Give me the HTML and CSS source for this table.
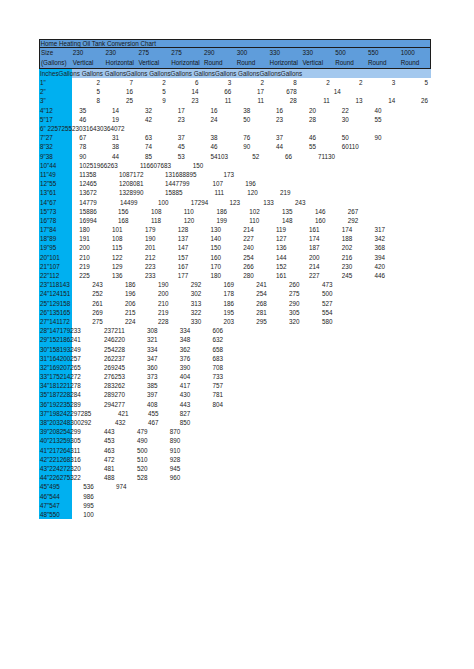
FILE: index.html
```html
<!DOCTYPE html>
<html>
<head>
<meta charset="utf-8">
<title>Home Heating Oil Tank Conversion Chart</title>
<link rel="stylesheet" href="styles.css">
</head>
<body>
<div class="sheet">
  <div class="head">
    <div class="title">Home Heating Oil Tank Conversion Chart</div>
    <div class="row hrow"><span class="a">Size</span><span class="h">230</span><span class="h">230</span><span class="h">275</span><span class="h">275</span><span class="h">290</span><span class="h">300</span><span class="h">330</span><span class="h">330</span><span class="h">500</span><span class="h">550</span><span class="h">1000</span></div>
    <div class="row hrow"><span class="a">(Gallons)</span><span class="h">Vertical</span><span class="h">Horizontal</span><span class="h">Vertical</span><span class="h">Horizontal</span><span class="h">Round</span><span class="h">Round</span><span class="h">Horizontal</span><span class="h">Vertical</span><span class="h">Round</span><span class="h">Round</span><span class="h">Round</span></div>
  </div>
  <div class="body">
    <div class="inches">InchesGallons Gallons GallonsGallons GallonsGallons GallonsGallons GallonsGallonsGallons</div>
    <div class="row"><span class="a">1"</span><span class="r">2</span><span class="r">7</span><span class="r">2</span><span class="r">6</span><span class="r">3</span><span class="r">2</span><span class="r">8</span><span class="r">2</span><span class="r">2</span><span class="r">3</span><span class="r">5</span></div>
    <div class="row"><span class="a">2"</span><span class="r">5</span><span class="r">16</span><span class="r">5</span><span class="r">14</span><span class="r">66</span><span class="r">17</span><span class="r">678</span><span></span><span class="p0">14</span></div>
    <div class="row"><span class="a">3"</span><span class="r">8</span><span class="r">25</span><span class="r">9</span><span class="r">23</span><span class="r">11</span><span class="r">11</span><span class="r">28</span><span class="r">11</span><span class="r">13</span><span class="r">14</span><span class="r">26</span></div>
    <div class="row"><span class="a">4"12</span><span class="p8">35</span><span class="p8">14</span><span class="p8">32</span><span class="p8">17</span><span class="p8">16</span><span class="p8">38</span><span class="p8">16</span><span class="p8">20</span><span class="p8">22</span><span class="p8">40</span></div>
    <div class="row"><span class="a">5"17</span><span class="p8">46</span><span class="p8">19</span><span class="p8">42</span><span class="p8">23</span><span class="p8">24</span><span class="p8">50</span><span class="p8">23</span><span class="p8">28</span><span class="p8">30</span><span class="p8">55</span></div>
    <div class="row"><span class="a">6" 2257255230316430364072</span></div>
    <div class="row"><span class="a">7"27</span><span class="p8">67</span><span class="p8">31</span><span class="p8">63</span><span class="p8">37</span><span class="p8">38</span><span class="p8">76</span><span class="p8">37</span><span class="p8">46</span><span class="p8">50</span><span class="p8">90</span></div>
    <div class="row"><span class="a">8"32</span><span class="p8">78</span><span class="p8">38</span><span class="p8">74</span><span class="p8">45</span><span class="p8">46</span><span class="p8">90</span><span class="p8">44</span><span class="p8">55</span><span class="p8">60110</span></div>
    <div class="row"><span class="a">9"38</span><span class="p8">90</span><span class="p8">44</span><span class="p8">85</span><span class="p8">53</span><span class="p8">54103</span><span class="p17">52</span><span class="p17">66</span><span class="p17">71130</span></div>
    <div class="row"><span class="a">10"44</span><span class="p8">10251966263</span><span></span><span class="p3">116607683</span><span class="p23">150</span></div>
    <div class="row"><span class="a">11"49</span><span class="p8">11358</span><span class="p15">1087172</span><span class="p28">131688895</span><span></span><span class="p21">173</span></div>
    <div class="row"><span class="a">12"55</span><span class="p8">12465</span><span class="p15">1208081</span><span class="p28">1447799</span><span></span><span class="p10">107</span><span class="p10">196</span></div>
    <div class="row"><span class="a">13"61</span><span class="p8">13672</span><span class="p15">1328990</span><span class="p28">15885</span><span></span><span class="p12">111</span><span class="p12">120</span><span class="p12">219</span></div>
    <div class="row"><span class="a">14"67</span><span class="p8">14779</span><span class="p16">14499</span><span class="p21">100</span><span class="p21">17294</span><span class="p27">123</span><span class="p28">133</span><span class="p27">243</span></div>
    <div class="row"><span class="a">15"73</span><span class="p8">15886</span><span class="p14">156</span><span class="p14">108</span><span class="p14">110</span><span class="p14">186</span><span class="p14">102</span><span class="p14">135</span><span class="p14">146</span><span class="p14">267</span></div>
    <div class="row"><span class="a">16"78</span><span class="p8">16994</span><span class="p14">168</span><span class="p14">118</span><span class="p14">120</span><span class="p14">199</span><span class="p14">110</span><span class="p14">148</span><span class="p14">160</span><span class="p14">292</span></div>
    <div class="row"><span class="a">17"84</span><span class="p8">180</span><span class="p8">101</span><span class="p8">179</span><span class="p8">128</span><span class="p8">130</span><span class="p8">214</span><span class="p8">119</span><span class="p8">161</span><span class="p8">174</span><span class="p8">317</span></div>
    <div class="row"><span class="a">18"89</span><span class="p8">191</span><span class="p8">108</span><span class="p8">190</span><span class="p8">137</span><span class="p8">140</span><span class="p8">227</span><span class="p8">127</span><span class="p8">174</span><span class="p8">188</span><span class="p8">342</span></div>
    <div class="row"><span class="a">19"95</span><span class="p8">200</span><span class="p8">115</span><span class="p8">201</span><span class="p8">147</span><span class="p8">150</span><span class="p8">240</span><span class="p8">136</span><span class="p8">187</span><span class="p8">202</span><span class="p8">368</span></div>
    <div class="row"><span class="a">20"101</span><span class="p8">210</span><span class="p8">122</span><span class="p8">212</span><span class="p8">157</span><span class="p8">160</span><span class="p8">254</span><span class="p8">144</span><span class="p8">200</span><span class="p8">216</span><span class="p8">394</span></div>
    <div class="row"><span class="a">21"107</span><span class="p8">219</span><span class="p8">129</span><span class="p8">223</span><span class="p8">167</span><span class="p8">170</span><span class="p8">266</span><span class="p8">152</span><span class="p8">214</span><span class="p8">230</span><span class="p8">420</span></div>
    <div class="row"><span class="a">22"112</span><span class="p8">225</span><span class="p8">136</span><span class="p8">233</span><span class="p8">177</span><span class="p8">180</span><span class="p8">280</span><span class="p8">161</span><span class="p8">227</span><span class="p8">245</span><span class="p8">446</span></div>
    <div class="row"><span class="a">23"118143</span><span class="p21">243</span><span class="p21">186</span><span class="p21">190</span><span class="p21">292</span><span class="p21">169</span><span class="p21">241</span><span class="p21">260</span><span class="p21">473</span></div>
    <div class="row"><span class="a">24"124151</span><span class="p21">252</span><span class="p21">196</span><span class="p21">200</span><span class="p21">302</span><span class="p21">178</span><span class="p21">254</span><span class="p21">275</span><span class="p21">500</span></div>
    <div class="row"><span class="a">25"129158</span><span class="p21">261</span><span class="p21">206</span><span class="p21">210</span><span class="p21">313</span><span class="p21">186</span><span class="p21">268</span><span class="p21">290</span><span class="p21">527</span></div>
    <div class="row"><span class="a">26"135165</span><span class="p21">269</span><span class="p21">215</span><span class="p21">219</span><span class="p21">322</span><span class="p21">195</span><span class="p21">281</span><span class="p21">305</span><span class="p21">554</span></div>
    <div class="row"><span class="a">27"141172</span><span class="p21">275</span><span class="p21">224</span><span class="p21">228</span><span class="p21">330</span><span class="p21">203</span><span class="p21">295</span><span class="p21">320</span><span class="p21">580</span></div>
    <div class="row"><span class="a">28"147179233</span><span></span><span class="p0">237211</span><span class="p10">308</span><span class="p10">334</span><span class="p10">606</span></div>
    <div class="row"><span class="a">29"152186241</span><span></span><span class="p0">246220</span><span class="p10">321</span><span class="p10">348</span><span class="p10">632</span></div>
    <div class="row"><span class="a">30"158193249</span><span></span><span class="p0">254228</span><span class="p10">334</span><span class="p10">362</span><span class="p10">658</span></div>
    <div class="row"><span class="a">31"164200257</span><span></span><span class="p0">262237</span><span class="p10">347</span><span class="p10">376</span><span class="p10">683</span></div>
    <div class="row"><span class="a">32"169207265</span><span></span><span class="p0">269245</span><span class="p10">360</span><span class="p10">390</span><span class="p10">708</span></div>
    <div class="row"><span class="a">33"175214272</span><span></span><span class="p0">276253</span><span class="p10">373</span><span class="p10">404</span><span class="p10">733</span></div>
    <div class="row"><span class="a">34"181221278</span><span></span><span class="p0">283262</span><span class="p10">385</span><span class="p10">417</span><span class="p10">757</span></div>
    <div class="row"><span class="a">35"187228284</span><span></span><span class="p0">289270</span><span class="p10">397</span><span class="p10">430</span><span class="p10">781</span></div>
    <div class="row"><span class="a">36"192235289</span><span></span><span class="p0">294277</span><span class="p10">408</span><span class="p10">443</span><span class="p10">804</span></div>
    <div class="row"><span class="a">37"198242297285</span><span></span><span class="p14">421</span><span class="p11">455</span><span class="p10">827</span></div>
    <div class="row"><span class="a">38"203248300292</span><span></span><span class="p11">432</span><span class="p11">467</span><span class="p10">850</span></div>
    <div class="row"><span class="a">39"208254299</span><span></span><span class="p0">443</span><span class="p0">479</span><span class="p0">870</span></div>
    <div class="row"><span class="a">40"213259305</span><span></span><span class="p0">453</span><span class="p0">490</span><span class="p0">890</span></div>
    <div class="row"><span class="a">41"217264311</span><span></span><span class="p0">463</span><span class="p0">500</span><span class="p0">910</span></div>
    <div class="row"><span class="a">42"221268316</span><span></span><span class="p0">472</span><span class="p0">510</span><span class="p0">928</span></div>
    <div class="row"><span class="a">43"224272320</span><span></span><span class="p0">481</span><span class="p0">520</span><span class="p0">945</span></div>
    <div class="row"><span class="a">44"226275322</span><span></span><span class="p0">488</span><span class="p0">528</span><span class="p0">960</span></div>
    <div class="row"><span class="a">45"495</span><span class="p12">536</span><span class="p12">974</span></div>
    <div class="row"><span class="a">46"544</span><span class="p12">986</span></div>
    <div class="row"><span class="a">47"547</span><span class="p12">995</span></div>
    <div class="row"><span class="a">48"550</span><span class="p12">100</span></div>
  </div>
</div>
</body>
</html>
```
FILE: styles.css
```css
html, body {
  margin: 0;
  padding: 0;
  background: #ffffff;
}

body {
  font-family: "Liberation Sans", Arial, sans-serif;
  font-size: 6.3px;
  color: #222222;
}

.sheet {
  margin: 39px 0 0 38.5px;
  width: 394px;
}

.row {
  display: grid;
  grid-template-columns: repeat(12, 32.8px);
  height: 9.19px;
  line-height: 9.19px;
  white-space: nowrap;
}

.row > span {
  min-width: 0;
  overflow: visible;
}

.head {
  box-sizing: border-box;
  width: 392px;
  border: 1px solid #1c1c1c;
  background: #5f9ddb;
  color: #161616;
}

.title {
  height: 7px;
  line-height: 7px;
  padding-left: 1px;
  border-bottom: 1px solid #1c1c1c;
  white-space: nowrap;
}

.hrow {
  height: 10px;
  line-height: 10px;
  grid-template-columns: 32.3px repeat(11, 32.8px);
}

.h {
  padding-left: 1px;
}

.body {
  background: linear-gradient(to right, #00b0f0 0, #00b0f0 33.5px, transparent 33.5px);
}

.inches {
  width: 392px;
  height: 9.1px;
  line-height: 9.1px;
  padding-left: 1.5px;
  box-sizing: border-box;
  white-space: nowrap;
  color: #1e1e1e;
  background: linear-gradient(to right, #00b0f0 0, #00b0f0 33.5px, #a3c8ee 33.5px);
}

.a { padding-left: 1.5px; color: #1a1a1a; }
.r { text-align: right; padding-right: 4px; }
.p0 { padding-left: 0; }
.p3 { padding-left: 3px; }
.p8 { padding-left: 8px; }
.p10 { padding-left: 10px; }
.p11 { padding-left: 11px; }
.p12 { padding-left: 12px; }
.p14 { padding-left: 14px; }
.p15 { padding-left: 15px; }
.p16 { padding-left: 16px; }
.p17 { padding-left: 17px; }
.p21 { padding-left: 21px; }
.p23 { padding-left: 23px; }
.p27 { padding-left: 27px; }
.p28 { padding-left: 28px; }
```
